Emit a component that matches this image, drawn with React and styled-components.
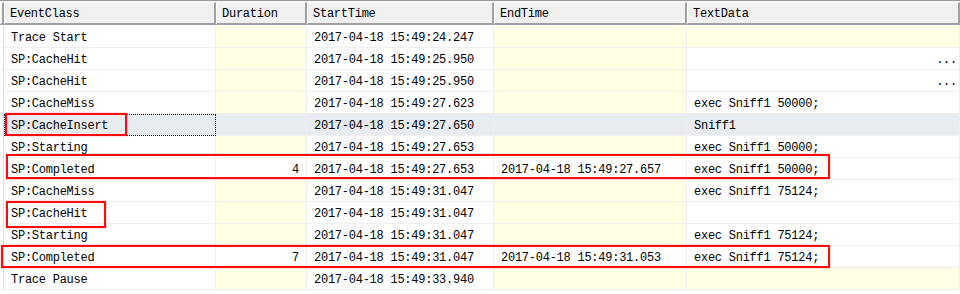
import React from "react";
import styled, { createGlobalStyle } from "styled-components";

const Y = "y"; // not-applicable cell, painted yellow

const rows = [
  { ev: "Trace Start", dur: Y, start: "2017-04-18 15:49:24.247", end: Y, text: Y },
  { ev: "SP:CacheHit", dur: Y, start: "2017-04-18 15:49:25.950", end: Y, text: "...", more: true },
  { ev: "SP:CacheHit", dur: Y, start: "2017-04-18 15:49:25.950", end: Y, text: "...", more: true },
  { ev: "SP:CacheMiss", dur: Y, start: "2017-04-18 15:49:27.623", end: Y, text: "exec Sniff1 50000;" },
  { ev: "SP:CacheInsert", dur: "", start: "2017-04-18 15:49:27.650", end: "", text: "Sniff1", selected: true },
  { ev: "SP:Starting", dur: Y, start: "2017-04-18 15:49:27.653", end: Y, text: "exec Sniff1 50000;" },
  { ev: "SP:Completed", dur: "4", start: "2017-04-18 15:49:27.653", end: "2017-04-18 15:49:27.657", text: "exec Sniff1 50000;" },
  { ev: "SP:CacheMiss", dur: Y, start: "2017-04-18 15:49:31.047", end: Y, text: "exec Sniff1 75124;" },
  { ev: "SP:CacheHit", dur: Y, start: "2017-04-18 15:49:31.047", end: Y, text: "" },
  { ev: "SP:Starting", dur: Y, start: "2017-04-18 15:49:31.047", end: Y, text: "exec Sniff1 75124;" },
  { ev: "SP:Completed", dur: "7", start: "2017-04-18 15:49:31.047", end: "2017-04-18 15:49:31.053", text: "exec Sniff1 75124;" },
  { ev: "Trace Pause", dur: Y, start: "2017-04-18 15:49:33.940", end: Y, text: Y },
];

const marks = [
  { left: 5, top: 113, width: 122, height: 23 },
  { left: 6, top: 154, width: 824, height: 25 },
  { left: 6, top: 201, width: 100, height: 27 },
  { left: 1, top: 245, width: 829, height: 23 },
];

const GlobalStyle = createGlobalStyle`
  body {
    margin: 0;
    background: #ffffff;
    font-family: "Liberation Mono", "DejaVu Sans Mono", monospace;
  }
`;

const COLS = "4px 212px 91px 187px 193px 1fr";

const Grid = styled.div`
  position: relative;
  width: 960px;
  height: 294px;
  overflow: hidden;
  font-size: 12px;
  letter-spacing: -0.25px;
  color: #000;
`;

const HeaderRow = styled.div`
  display: grid;
  grid-template-columns: ${COLS};
  border-top: 1px solid #9a9a9a;
  padding-top: 1px;
  height: 24px;
  box-sizing: border-box;
  background: #f0f0f0;
`;

const HeadCell = styled.div`
  display: flex;
  align-items: center;
  padding: 1px 0 0 5px;
  box-sizing: border-box;
  height: 23px;
  background: #f0f0f0;
  border-top: 1px solid #ffffff;
  border-left: 1px solid #ffffff;
  border-right: 2px solid #a0a0a0;
  border-bottom: 2px solid #a0a0a0;
  white-space: nowrap;
  overflow: hidden;
`;

const Body = styled.div`
  padding-top: 2px;
`;

const Row = styled.div`
  display: grid;
  grid-template-columns: ${COLS};
  height: 22px;
`;

const Cell = styled.div`
  display: flex;
  align-items: center;
  justify-content: ${({ $right }) => ($right ? "flex-end" : "flex-start")};
  box-sizing: border-box;
  padding: ${({ $right }) => ($right ? "2px 7px 0 0" : "2px 0 0 7px")};
  border-right: 1px solid #efefef;
  border-bottom: 1px solid #efefef;
  background: ${({ $selected, $yellow }) =>
    $selected ? "#e8ebef" : $yellow ? "#ffffe3" : "#ffffff"};
  white-space: nowrap;
  overflow: hidden;
  outline: ${({ $focus }) => ($focus ? "1px dotted #000" : "none")};
  outline-offset: -1px;
`;

const Stub = styled.div`
  box-sizing: border-box;
  border-right: 1px solid #dcdcdc;
  background: #ffffff;
`;

const Mark = styled.div`
  position: absolute;
  box-sizing: border-box;
  border: 2px solid #ff0a0a;
  box-shadow: 0 0 1px rgba(255, 0, 0, 0.6);
  pointer-events: none;
`;

function DataCell({ value, right, selected, focus, more }) {
  const yellow = value === Y;
  return (
    <Cell
      $right={right || more}
      $yellow={yellow && !selected}
      $selected={selected}
      $focus={focus}
      style={more ? { paddingRight: 2 } : undefined}
    >
      {yellow ? "" : value}
    </Cell>
  );
}

export default function App() {
  return (
    <>
      <GlobalStyle />
      <Grid>
        <HeaderRow>
          <HeadCell style={{ padding: 0 }} />
          <HeadCell>EventClass</HeadCell>
          <HeadCell>Duration</HeadCell>
          <HeadCell>StartTime</HeadCell>
          <HeadCell>EndTime</HeadCell>
          <HeadCell>TextData</HeadCell>
        </HeaderRow>
        <Body>
          {rows.map((r, i) => (
            <Row key={i}>
              <Stub />
              <DataCell value={r.ev} selected={r.selected} focus={r.selected} />
              <DataCell value={r.dur} right selected={r.selected} />
              <DataCell value={r.start} selected={r.selected} />
              <DataCell value={r.end} selected={r.selected} />
              <DataCell value={r.text} selected={r.selected} more={r.more} />
            </Row>
          ))}
        </Body>
        {marks.map((m, i) => (
          <Mark key={i} style={m} />
        ))}
      </Grid>
    </>
  );
}
